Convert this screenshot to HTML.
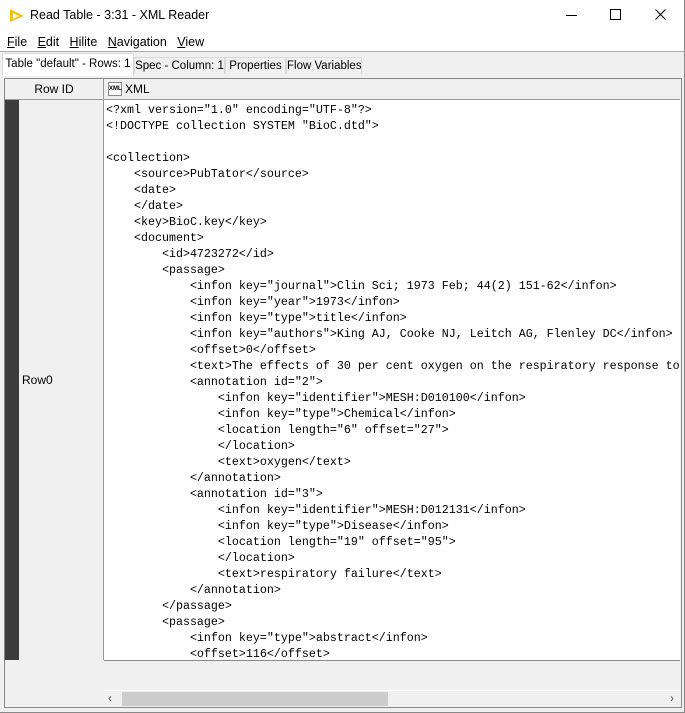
<!DOCTYPE html>
<html><head><style>
body{margin:0;width:685px;height:713px;overflow:hidden;background:#f0f0f0;font-family:"Liberation Sans",sans-serif;font-size:12px;color:#000;position:relative}
.abs{position:absolute}
#win{position:absolute;left:0;top:0;width:684px;height:712px;border-right:1px solid #888;border-bottom:1px solid #888}
#title{left:0;top:0;width:684px;height:51px;background:#fff;border-bottom:1px solid #aaa}
.tab{position:absolute;top:57px;height:17px;border:1px solid #d9d9d9;border-bottom:none;background:#f0f0f0;line-height:17px;font-size:11.5px;white-space:nowrap;text-align:center;box-sizing:border-box}
pre{margin:0;font-family:"Liberation Mono",monospace;font-size:11.67px;line-height:16px;white-space:pre}
</style></head><body>
<div id="win"></div>
<div id="title" class="abs">
<svg class="abs" style="left:9px;top:8px" width="16" height="15"><polygon points="1,1 15,8 1,14" fill="#f5c400"/><polygon points="4,5 10,8 4,11" fill="#fff"/></svg>
<div class="abs" style="left:30px;top:8px;font-size:12.5px">Read Table - 3:31 - XML Reader</div>
<div class="abs" style="left:566px;top:15px;width:11px;height:1px;background:#000"></div>
<div class="abs" style="left:610px;top:9px;width:9px;height:9px;border:1px solid #000"></div>
<svg class="abs" style="left:655px;top:9px" width="11" height="11"><path d="M0.5 0.5L10.5 10.5M10.5 0.5L0.5 10.5" stroke="#000" stroke-width="1"/></svg>
<div class="abs" style="left:7px;top:35px;font-size:12.5px"><u>F</u>ile&nbsp;&nbsp; <u>E</u>dit&nbsp;&nbsp; <u>H</u>ilite&nbsp;&nbsp; <u>N</u>avigation&nbsp;&nbsp; <u>V</u>iew</div>
</div>
<div class="tab" style="left:2px;top:53px;height:23px;background:#fff;line-height:21px;width:132px">Table "default" - Rows: 1</div>
<div class="tab" style="left:134px;width:91px">Spec - Column: 1</div>
<div class="tab" style="left:225px;width:61px">Properties</div>
<div class="tab" style="left:286px;width:76px">Flow Variables</div>
<div class="abs" style="left:4px;top:78px;width:676px;height:628px;border:1px solid #888;background:#f0f0f0"></div>
<div class="abs" style="left:5px;top:79px;width:98px;height:20px;border-right:1px solid #999;border-bottom:1px solid #999;text-align:center;line-height:20px">Row ID</div>
<div class="abs" style="left:104px;top:79px;width:576px;height:20px;border-bottom:1px solid #999;line-height:20px">
<span class="abs" style="left:4px;top:3px;width:12px;height:12px;border:1px solid #888;background:#fff;font-size:6px;line-height:12px;text-align:center;font-weight:bold">XML</span><span class="abs" style="left:21px">XML</span></div>
<div class="abs" style="left:5px;top:100px;width:14px;height:560px;background:#3c3c3c"></div>
<div class="abs" style="left:19px;top:100px;width:84px;height:560px;background:#f0f0f0;border-right:1px solid #999"></div>
<div class="abs" style="left:22px;top:373px">Row0</div>
<div class="abs" style="left:104px;top:100px;width:576px;height:560px;background:#fff;overflow:hidden;border-bottom:1px solid #888">
<pre style="position:absolute;left:2px;top:2px">&lt;?xml version="1.0" encoding="UTF-8"?&gt;
&lt;!DOCTYPE collection SYSTEM "BioC.dtd"&gt;

&lt;collection&gt;
    &lt;source&gt;PubTator&lt;/source&gt;
    &lt;date&gt;
    &lt;/date&gt;
    &lt;key&gt;BioC.key&lt;/key&gt;
    &lt;document&gt;
        &lt;id&gt;4723272&lt;/id&gt;
        &lt;passage&gt;
            &lt;infon key="journal"&gt;Clin Sci; 1973 Feb; 44(2) 151-62&lt;/infon&gt;
            &lt;infon key="year"&gt;1973&lt;/infon&gt;
            &lt;infon key="type"&gt;title&lt;/infon&gt;
            &lt;infon key="authors"&gt;King AJ, Cooke NJ, Leitch AG, Flenley DC&lt;/infon&gt;
            &lt;offset&gt;0&lt;/offset&gt;
            &lt;text&gt;The effects of 30 per cent oxygen on the respiratory response to
            &lt;annotation id="2"&gt;
                &lt;infon key="identifier"&gt;MESH:D010100&lt;/infon&gt;
                &lt;infon key="type"&gt;Chemical&lt;/infon&gt;
                &lt;location length="6" offset="27"&gt;
                &lt;/location&gt;
                &lt;text&gt;oxygen&lt;/text&gt;
            &lt;/annotation&gt;
            &lt;annotation id="3"&gt;
                &lt;infon key="identifier"&gt;MESH:D012131&lt;/infon&gt;
                &lt;infon key="type"&gt;Disease&lt;/infon&gt;
                &lt;location length="19" offset="95"&gt;
                &lt;/location&gt;
                &lt;text&gt;respiratory failure&lt;/text&gt;
            &lt;/annotation&gt;
        &lt;/passage&gt;
        &lt;passage&gt;
            &lt;infon key="type"&gt;abstract&lt;/infon&gt;
            &lt;offset&gt;116&lt;/offset&gt;</pre></div>
<div class="abs" style="left:104px;top:690px;width:576px;height:16px;background:#f0f0f0;border-top:1px solid #fff"></div>
<div class="abs" style="left:122px;top:692px;width:266px;height:14px;background:#cdcdcd"></div>
<div class="abs" style="left:108px;top:691px;font-size:12px;color:#555">‹</div>
<div class="abs" style="left:670px;top:691px;font-size:12px;color:#555">›</div>
</body></html>
